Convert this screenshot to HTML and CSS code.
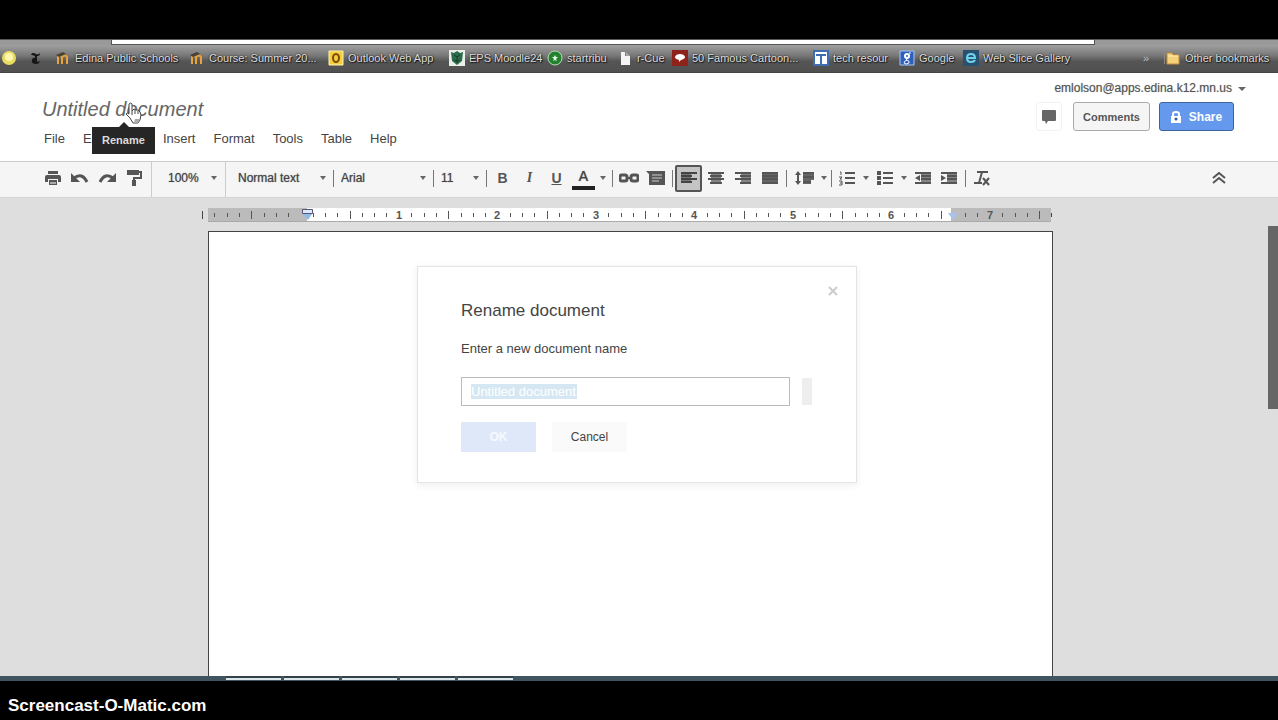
FILE: index.html
```html
<!DOCTYPE html>
<html lang="en">
<head>
<meta charset="utf-8">
<title>Untitled document</title>
<link rel="stylesheet" href="styles.css">
</head>
<body>
<div class="letterbox-top"></div>
<div class="tab-strip"><div class="address-bar"></div></div>
<nav class="bookmarks" aria-label="Bookmarks">
  <a href="#" aria-label="Bookmark"><svg width="16" height="16" viewBox="0 0 16 16"><circle cx="8" cy="8" r="7" fill="#e9dc62"/><circle cx="8" cy="7" r="4" fill="#fff7b0"/></svg></a>
  <a href="#" aria-label="Times"><svg width="16" height="16" viewBox="0 0 16 16"><path d="M3 5c1-3 3-2 5-1s3 0 4-1c0 3-2 3-3 3v6c2 0 3-1 3-2 0 3-2 4-4 4s-5-1-4-4 2-2 3-2V6C5 5 4 5 3 5z" fill="#161616"/></svg></a>
  <a href="#"><svg width="16" height="16" viewBox="0 0 16 16"><path d="M3 14V7q2-3 4 0v7M7 7q3-3 5 0v7" fill="none" stroke="#e8a33c" stroke-width="2"/><path d="M1 5l7-3 3 2-7 3z" fill="#4a4136"/></svg>Edina Public Schools</a>
  <a href="#"><svg width="16" height="16" viewBox="0 0 16 16"><path d="M3 14V7q2-3 4 0v7M7 7q3-3 5 0v7" fill="none" stroke="#e8a33c" stroke-width="2"/><path d="M1 5l7-3 3 2-7 3z" fill="#4a4136"/></svg>Course: Summer 20...</a>
  <a href="#"><svg width="16" height="16" viewBox="0 0 16 16"><path d="M1 1h14v14H1z" fill="#f2cf3c" stroke="#fff3b0"/><ellipse cx="8" cy="8" rx="3" ry="4" fill="none" stroke="#7b4a0c" stroke-width="2"/></svg>Outlook Web App</a>
  <a href="#"><svg width="16" height="16" viewBox="0 0 16 16"><path d="M0 0h16v16H0z" fill="#e9efe9"/><path d="M2 2l3 1 3-2 3 2 3-1-1 9-5 4-5-4z" fill="#2c6b4c"/><path d="M5 5l3 2 3-2M8 7v6M5 10l3 1 3-1" stroke="#173c2a" fill="none"/></svg>EPS Moodle24</a>
  <a href="#"><svg width="16" height="16" viewBox="0 0 16 16"><circle cx="8" cy="8" r="7" fill="#23812f" stroke="#b7e0b5"/><path d="M8 5l1 2h2L9 9l1 2-2-1-2 1 1-2-2-2h2z" fill="#e9f9e6"/></svg>startribu</a>
  <a href="#"><svg width="16" height="16" viewBox="0 0 16 16"><path d="M4 2h4v4h5v9H4z" fill="#f4f4f4"/><path d="M9 2l4 4H9z" fill="#aaa"/></svg>r-Cue</a>
  <a href="#"><svg width="16" height="16" viewBox="0 0 16 16"><path d="M0 0h16v16H0z" fill="#8d231b"/><ellipse cx="8" cy="7" rx="5" ry="3" fill="#fff"/><path d="M7 9h3l-3 3z" fill="#fff"/></svg>50 Famous Cartoon...</a>
  <a href="#"><svg width="16" height="16" viewBox="0 0 16 16"><path d="M1 1h14v14H1z" fill="#fff" stroke="#3d6eb0" stroke-width="2"/><path d="M3 5h10M8 5v9" stroke="#3d6eb0" stroke-width="2"/></svg>tech resour</a>
  <a href="#"><svg width="16" height="16" viewBox="0 0 16 16"><path d="M1 1h14v14H1z" fill="#2f5fbd" stroke="#a9c6f2"/><circle cx="8" cy="6" r="2" fill="none" stroke="#fff" stroke-width="2"/><path d="M10 3h2M8 8q-2 1 0 2 3 1 2 3-3 2-5 0 0-2 3-3" fill="none" stroke="#fff"/></svg>Google</a>
  <a href="#"><svg width="16" height="16" viewBox="0 0 16 16"><path d="M0 0h16v16H0z" fill="#27516e"/><path d="M4 8h8q0-4-4-4T4 8t4 4q3 0 4-2" fill="none" stroke="#6fd3ef" stroke-width="2"/></svg>Web Slice Gallery</a>
  <span class="more">»</span>
  <a href="#"><svg width="16" height="16" viewBox="0 0 16 16"><path d="M2 3h5l1 2h6v9H2z" fill="#f5d27a" stroke="#c48f36"/><path d="M3 6h10" stroke="#fff0b8"/></svg>Other bookmarks</a>
</nav>

<header class="doc-header">
  <div class="doc-info">
    <h1 class="doc-title">Untitled document
      <svg class="pointer" width="18" height="24" viewBox="0 0 18 24"><path d="M4 2q2-2 3 0v7l2-2 2 1 2 0 2 2 1 3-1 5-2 3H8l-3-5-4-4q1-2 3 0z" fill="#fff" stroke="#444"/><path d="M7 9v4M10 8v4M13 9v3" stroke="#444"/><path d="M9 21l1-4 5 0-2 4z" fill="#aaa"/></svg>
    </h1>
    <nav class="menus" aria-label="Document menu">
      <button>File</button><button class="edit">Edit</button><button>Insert</button><button>Format</button><button>Tools</button><button>Table</button><button>Help</button>
      <span class="tooltip" role="tooltip">Rename</span>
    </nav>
  </div>
  <div class="account">
    <button class="email">emlolson@apps.edina.k12.mn.us<span class="caret"></span></button>
    <div class="actions">
      <button class="chat" aria-label="Show chat"><svg width="16" height="14" viewBox="0 0 16 14"><path d="M2 0h12q1 0 1 1v9q0 1-1 1H7l-2 3-1-3H2q-1 0-1-1V1q0-1 1-1z" fill="#666"/></svg></button>
      <button class="comments">Comments</button>
      <button class="share"><svg width="10" height="12" viewBox="0 0 10 12"><path d="M2 6V3q0-2 3-2t3 2v3" fill="none" stroke="#fff" stroke-width="2"/><path d="M0 5h10v7H0z" fill="#fff"/><circle cx="5" cy="8" r="1.5" fill="#345a9c"/></svg>Share</button>
    </div>
  </div>
</header>

<div class="toolbar" role="toolbar" aria-label="Formatting">
  <div class="group first">
    <button aria-label="Print"><svg width="16" height="16" viewBox="0 0 16 16"><path d="M3 1h10v3H3zM2 5h12q2 0 2 2v5h-3V9H3v3H0V7q0-2 2-2zM4 10h8v5H4z" fill="#555"/><path d="M5 12h6v2H5z" fill="#aaa"/></svg></button>
    <button aria-label="Undo"><svg width="18" height="16" viewBox="0 0 18 16"><path d="M3 8q8-6 13 4" fill="none" stroke="#555" stroke-width="3"/><path d="M0 3v9h9z" fill="#555"/></svg></button>
    <button aria-label="Redo"><svg width="18" height="16" viewBox="0 0 18 16"><path d="M15 8Q7 2 2 12" fill="none" stroke="#555" stroke-width="3"/><path d="M18 3v9H9z" fill="#555"/></svg></button>
    <button aria-label="Paint format"><svg width="16" height="18" viewBox="0 0 16 18"><path d="M1 1h12v5H1z" fill="#555"/><path d="M13 3h2v6H8v3" fill="none" stroke="#555" stroke-width="2"/><path d="M6 11h4v6H6z" fill="#555"/></svg></button>
  </div>
  <label class="field zoom"><select aria-label="Zoom"><option>100%</option></select></label>
  <label class="field style"><select aria-label="Style"><option>Normal text</option></select></label>
  <label class="field family"><select aria-label="Font"><option>Arial</option></select></label>
  <label class="field size"><select aria-label="Font size"><option>11</option></select></label>
  <div class="group">
    <button aria-label="Bold" class="glyph">B</button>
    <button aria-label="Italic" class="glyph italic">I</button>
    <button aria-label="Underline" class="glyph underline">U</button>
    <button aria-label="Text color" class="color">A</button>
    <button aria-label="Text color options" class="drop"><span class="caret"></span></button>
  </div>
  <div class="group">
    <button aria-label="Insert link"><svg width="20" height="12" viewBox="0 0 20 12"><rect x="1" y="3" width="7" height="6" rx="2" fill="none" stroke="#555" stroke-width="3"/><rect x="12" y="3" width="7" height="6" rx="2" fill="none" stroke="#555" stroke-width="3"/><path d="M7 6h6" stroke="#555" stroke-width="2"/></svg></button>
    <button aria-label="Insert comment"><svg width="20" height="16" viewBox="0 0 20 16"><path d="M0 1h19v14H3V4z" fill="#555"/><path d="M6 5h10M6 8h10M6 11h7" stroke="#ccc"/></svg></button>
  </div>
  <div class="group">
    <button aria-label="Align left" aria-pressed="true" class="pressed"><svg width="16" height="14" viewBox="0 0 16 14"><path d="M0 2h16M0 5h11M0 8h16M0 11h11" stroke="#444" stroke-width="2"/><path d="M0 1h10v11H0z" fill="#444" opacity=".6"/></svg></button>
    <button aria-label="Align center"><svg width="16" height="14" viewBox="0 0 16 14"><path d="M0 2h16M2 5h12M0 8h16M2 12h12" stroke="#555" stroke-width="2"/><path d="M3 1h10v12H3z" fill="#555" opacity=".7"/></svg></button>
    <button aria-label="Align right"><svg width="16" height="14" viewBox="0 0 16 14"><path d="M0 2h16M5 5h11M0 8h16M5 12h11" stroke="#555" stroke-width="2"/><path d="M6 1h10v12H6z" fill="#555" opacity=".7"/></svg></button>
    <button aria-label="Justify"><svg width="16" height="14" viewBox="0 0 16 14"><path d="M0 1h16v12H0z" fill="#666"/><path d="M0 2h16M0 5h16M0 8h16M0 12h16" stroke="#555" stroke-width="2"/></svg></button>
  </div>
  <div class="group spacing">
    <button aria-label="Line spacing"><svg width="19" height="16" viewBox="0 0 19 16"><path d="M3 3v10" stroke="#555" stroke-width="2"/><path d="M0 5l3-4 3 4zM0 11l3 4 3-4z" fill="#555"/><path d="M8 2h11v8h-3v4H8z" fill="#666"/><path d="M8 3h11M8 7h11M8 12h8" stroke="#555" stroke-width="2"/></svg></button>
    <button aria-label="Line spacing options" class="drop"><span class="caret"></span></button>
  </div>
  <div class="group lists">
    <button aria-label="Numbered list"><svg width="16" height="16" viewBox="0 0 16 16"><path d="M6 3h10M6 8h10M6 13h10" stroke="#555" stroke-width="2"/><path d="M1 2h1v3M0 7h3l-2 2h2M0 11h3v4H0M1 13h2" fill="none" stroke="#555"/></svg></button>
    <button aria-label="Numbered list options" class="drop"><span class="caret"></span></button>
    <button aria-label="Bulleted list"><svg width="16" height="16" viewBox="0 0 16 16"><path d="M6 3h10M6 8h10M6 13h10" stroke="#555" stroke-width="2"/><path d="M0 1h4v4H0zM0 6h4v4H0zM0 11h4v4H0z" fill="#555"/></svg></button>
    <button aria-label="Bulleted list options" class="drop"><span class="caret"></span></button>
    <button aria-label="Decrease indent"><svg width="16" height="14" viewBox="0 0 16 14"><path d="M0 2h16M6 5h10M6 8h10M0 12h16" stroke="#555" stroke-width="2"/><path d="M6 2h10v10H6z" fill="#555" opacity=".7"/><path d="M5 4v6L0 7z" fill="#555"/></svg></button>
    <button aria-label="Increase indent"><svg width="16" height="14" viewBox="0 0 16 14"><path d="M0 2h16M6 5h10M6 8h10M0 12h16" stroke="#555" stroke-width="2"/><path d="M6 2h10v10H6z" fill="#555" opacity=".7"/><path d="M0 4v6l5-3z" fill="#555"/></svg></button>
  </div>
  <div class="group last">
    <button aria-label="Clear formatting"><svg width="18" height="16" viewBox="0 0 18 16"><path d="M4 2h11M9 2L6 13M1 13h8" fill="none" stroke="#555" stroke-width="2"/><path d="M10 8l6 7M16 8l-6 7" stroke="#555" stroke-width="2"/></svg></button>
  </div>
  <button class="collapse" aria-label="Hide menus"><svg width="14" height="12" viewBox="0 0 14 12"><path d="M1 6l6-5 6 5M1 11l6-5 6 5" fill="none" stroke="#555" stroke-width="2"/></svg></button>
</div>

<main class="workspace">
  <svg class="ruler" width="860" height="14" viewBox="0 0 860 14" aria-label="Ruler">
    <defs><pattern id="ticks" x="2" y="0" width="197" height="14" patternUnits="userSpaceOnUse"><path d="M12.5 5v4M25.500 5v4M37.500 5v4M49.500 3v8M62.500 5v4M74.500 5v4M86.500 5v4M111.500 5v4M123.500 5v4M135.500 5v4M148.500 3v8M160.500 5v4M172.500 5v4M184.500 5v4" stroke="#555"/></pattern></defs>
    <path d="M8 0h99v13H8zM751 0h100v13H751z" fill="#bbb"/><path d="M107 0h644v13H107z" fill="#fff"/>
    <path d="M8 13.500h843" stroke="#aaa"/>
    <path d="M8 0h843v13H8z" fill="url(#ticks)"/>
    <path d="M2.500 3v8M851.500 5v4" stroke="#444"/>
    <g font-family="Liberation Sans, Arial, sans-serif" font-size="11" font-weight="bold" fill="#555" text-anchor="middle"><text x="199" y="11">1</text><text x="297" y="11">2</text><text x="396" y="11">3</text><text x="494" y="11">4</text><text x="593" y="11">5</text><text x="691" y="11">6</text><text x="790" y="11">7</text></g>
    <path d="M102.500 1.500h10v4h-10z" fill="#dceaf8" stroke="#557"/><path d="M103 6h9l-4 6z" fill="#8fbbe8"/>
    <path d="M748 5h10l-5 7z" fill="#a9c3ea"/>
  </svg>
  <article class="page" aria-label="Document page"></article>
  <div class="scrollbar"></div>
  <div class="overlay">
    <form class="dialog" role="dialog" aria-labelledby="dialog-title">
      <button type="button" class="close" aria-label="Close"><svg width="10" height="10" viewBox="0 0 10 10"><path d="M1 1l8 8M9 1L1 9" stroke="#ccc" stroke-width="2"/></svg></button>
      <h2 id="dialog-title">Rename document</h2>
      <label for="doc-name">Enter a new document name</label>
      <div class="name-row"><input id="doc-name" type="text" value="Untitled document"><span class="thumb"></span></div>
      <div class="dialog-buttons"><button type="button" class="ok">OK</button><button type="button" class="cancel">Cancel</button></div>
    </form>
  </div>
</main>
<div class="taskbar"><span></span><span></span><span></span><span></span><span></span></div>
<footer class="watermark">Screencast-O-Matic.com</footer>
</body>
</html>
```
FILE: styles.css
```css
* { box-sizing: border-box; }
body {
  margin: 0;
  min-height: 100vh;
  display: flex;
  flex-direction: column;
  background: #000;
  color: #444;
  font: 12px "Liberation Sans", Arial, sans-serif;
}
button, select, input { font: inherit; color: inherit; margin: 0; padding: 0; border: 0; background: none; }
svg { display: block; flex: none; }

.letterbox-top { height: 39px; }
.tab-strip { height: 6px; padding: 0 183px 0 111px; background: #999; border-top: 1px solid #555; }
.address-bar { height: 5px; background: #fff; border: 1px solid #555; border-top: 0; }

.bookmarks {
  height: 28px;
  display: grid;
  grid-template-columns: 27px 27px 134px 139px 121px 98px 70px 55px 141px 86px 64px 176px 1fr 113px;
  align-items: center;
  padding: 0 0 2px 1px;
  background: linear-gradient(#a0a0a0, #777 40%, #555 60%, #505050);
  border-bottom: 1px solid #444;
  font-size: 11px;
}
.bookmarks a {
  display: flex;
  align-items: center;
  gap: 4px;
  color: #ddd;
  text-decoration: none;
  white-space: nowrap;
  text-shadow: 0 0 2px #000, 1px 1px 1px #222;
}
.more { color: #bbb; border-right: 1px solid #888; padding-left: 4px; }

.doc-header { height: 88px; display: flex; justify-content: space-between; background: #fff; }
.doc-info { padding: 24px 0 0 42px; }
.doc-title { position: relative; margin: 0; font-size: 20px; line-height: 24px; font-weight: normal; font-style: italic; color: #666; }
.pointer { position: absolute; left: 83px; top: 5px; z-index: 2; }
.menus { position: relative; display: flex; gap: 18px; padding: 9px 0 0 2px; font-size: 13px; line-height: 17px; text-shadow: 0 0 1px #999; }
.menus .edit { width: 62px; text-align: left; }
.tooltip {
  position: absolute;
  left: 50px;
  top: 6px;
  padding: 0 10px;
  line-height: 27px;
  background: #262626;
  color: #ddd;
  font-size: 11px;
  font-weight: bold;
  text-shadow: none;
}
.tooltip::before { content: ""; position: absolute; left: 27px; top: -5px; border: 5px solid transparent; border-top: 0; border-bottom-color: #262626; }
.account { display: flex; flex-direction: column; align-items: flex-end; padding: 8px 32px 0 0; }
.email { display: flex; align-items: center; gap: 6px; line-height: 15px; color: #555; text-shadow: 0 0 1px #aaa; }
.caret { display: block; border: 3px solid transparent; border-top: 4px solid #666; border-bottom: 0; }
.email .caret { border-width: 4px 4px 0; }
.actions { display: flex; gap: 9px; padding: 6px 12px 0 0; }
.actions button { height: 29px; font-weight: bold; font-size: 12px; border-radius: 3px; }
.actions .chat { width: 26px; margin-right: 2px; border: 1px solid #f3f3f3; padding-left: 4px; }
.actions .comments { width: 77px; font-size: 11px; border: 1px solid #aaa; background: #f5f5f5; color: #555; }
.actions .share { width: 75px; display: flex; align-items: center; justify-content: center; gap: 8px; border: 1px solid #40639e; background: #6599ee; color: #fff; }

.toolbar { height: 37px; display: flex; align-items: center; background: #f5f5f5; border-top: 1px solid #ccc; border-bottom: 1px solid #d4d4d4; }
.toolbar > * { height: 100%; padding-bottom: 3px; }
.group { display: flex; align-items: center; position: relative; padding: 0 4px 3px 2px; }
.group::after { content: ""; position: absolute; right: 0; top: 8px; width: 1px; height: 17px; background: #777; }
.group.first { padding-left: 39px; border-right: 1px solid #ccc; }
.group.first::after, .group.last::after { display: none; }
.group.spacing { padding-left: 4px; padding-right: 2px; }
.group button { width: 27px; height: 27px; display: flex; align-items: center; justify-content: center; }
.group.lists button { width: 26px; }
.group .drop, .group.lists .drop { width: 12px; }
.group .glyph { font-weight: bold; font-size: 14px; color: #555; }
.group .italic { font-family: "Liberation Serif", serif; font-style: italic; }
.group .underline { text-decoration: underline; }
.group .color { height: 23px; width: 23px; margin: 0 2px; font-size: 14px; border-bottom: 4px solid #222; text-shadow: 0 0 1px #444; }
.group .pressed { border: 2px solid #555; border-radius: 2px; background: #c4c4c4; }
.field { position: relative; display: flex; align-items: center; }
.field select { appearance: none; width: 100%; height: 17px; text-shadow: 0 0 1px #777; }
.field::after { content: ""; position: absolute; right: 8px; border: 3px solid transparent; border-top: 4px solid #666; border-bottom: 0; }
.zoom { width: 74px; border-right: 1px solid #ccc; }
.zoom select { padding-left: 16px; }
.style { width: 108px; }
.style select { padding-left: 12px; }
.family { width: 100px; }
.size { width: 53px; }
.family select, .size select { padding-left: 7px; }
.style select, .family select, .size select { border-right: 1px solid #777; }
.collapse { margin: 0 52px 0 auto; }

.workspace { flex: 1; display: flex; flex-direction: column; align-items: center; position: relative; padding: 10px 18px 0 0; background: #dedede; }
.ruler { margin-bottom: 9px; }
.page { flex: 1; width: 100%; max-width: 845px; background: #fff; border: 1px solid #444; border-bottom: 0; }
.scrollbar { position: absolute; right: 0; top: 28px; width: 10px; height: 183px; background: #666; }
.overlay { position: absolute; inset: 68px 4px auto 0; display: flex; justify-content: center; }
.dialog { position: relative; width: 440px; padding: 32px 44px 30px 43px; background: #fff; border: 1px solid #e4e4e4; box-shadow: 0 2px 8px #eee; }
.dialog h2 { margin: 0 0 18px; font-size: 17px; line-height: 24px; font-weight: normal; }
.dialog label { display: block; font-size: 13px; line-height: 16px; margin-bottom: 20px; }
.close { position: absolute; right: 18px; top: 19px; }
.name-row { display: flex; align-items: center; gap: 12px; margin-bottom: 16px; }
.name-row input {
  flex: none;
  width: 329px;
  height: 29px;
  padding: 0 9px;
  border: 1px solid #bbb;
  background: linear-gradient(#d5e7f3, #d5e7f3) 9px 6px / 106px 15px no-repeat #fff;
  color: #fff;
  font-size: 13px;
}
.thumb { flex: none; width: 10px; height: 27px; background: #eee; }
.dialog-buttons { display: flex; gap: 16px; }
.dialog-buttons button { width: 75px; height: 30px; }
.dialog-buttons .ok { background: #dfe8f8; color: #f6faff; font-weight: bold; }
.dialog-buttons .cancel { background: #fafafa; }

.taskbar { height: 5px; display: flex; gap: 3px; padding-left: 226px; background: #405560; }
.taskbar span { width: 55px; height: 4px; background: #dce6e8; border-top: 2px solid #344047; }
.watermark { height: 39px; padding: 13px 8px 0; color: #fff; font-size: 17px; line-height: 24px; font-weight: bold; }
```
